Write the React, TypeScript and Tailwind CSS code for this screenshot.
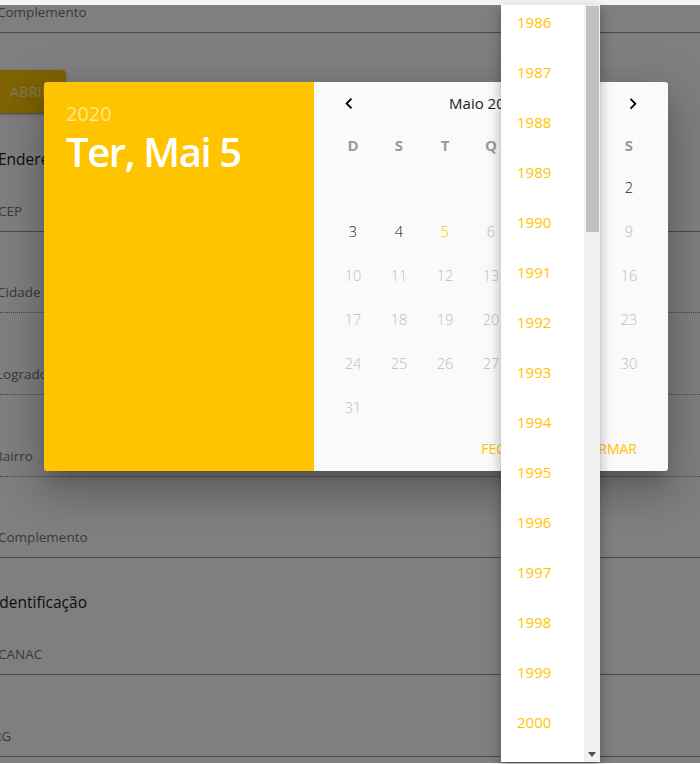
import React from "react";

type FieldProps = {
  label: string;
  height: string;
  shift: string;
  dotted?: boolean;
};

// underlying form field: label sits 10px above the bottom line
function Field({ label, height, shift, dotted }: FieldProps) {
  return (
    <div
      className={`${height} flex flex-col justify-end border-b ${
        dotted ? "border-dotted border-[#8a8a8a]" : "border-[#949494]"
      }`}
    >
      <span className={`${shift} mb-[10px] text-[13.5px] leading-[20px] text-[#757575] whitespace-nowrap`}>
        {label}
      </span>
    </div>
  );
}

function BackgroundForm() {
  return (
    <div className="flex flex-col w-[700px]">
      <Field label="Complemento" height="h-[33px]" shift="-ml-[3px]" />
      <button className="mt-[37px] -ml-[6px] h-[43px] w-[72px] rounded-[4px] bg-[#ffc400] text-left pl-[16px] text-[14px] font-medium tracking-[0.4px] text-[#fff2c0] shadow-[0_3px_1px_-2px_rgba(0,0,0,0.2),0_2px_2px_0_rgba(0,0,0,0.14),0_1px_5px_0_rgba(0,0,0,0.12)]">
        ABRIR
      </button>
      <h2 className="mt-[34px] -ml-[2px] text-[15.5px] leading-[24px] text-[#212121]">Endereço</h2>
      <Field label="CEP" height="h-[61px]" shift="-ml-[2px]" />
      <Field label="Cidade" height="h-[81px]" shift="-ml-[3px]" dotted />
      <Field label="Logradouro" height="h-[82px]" shift="-ml-[4px]" dotted />
      <Field label="Bairro" height="h-[82px]" shift="-ml-[6px]" dotted />
      <Field label="Complemento" height="h-[81px]" shift="-ml-[2px]" />
      <h2 className="mt-[32px] -ml-[5px] text-[15.5px] leading-[24px] text-[#212121]">Identificação</h2>
      <Field label="CANAC" height="h-[61px]" shift="-ml-[2px]" />
      <Field label="RG" height="h-[82px]" shift="-ml-[7px]" />
    </div>
  );
}

function Chevron({ dir }: { dir: "left" | "right" }) {
  return (
    <svg width="22" height="22" viewBox="0 0 24 24" fill="#000">
      {dir === "left" ? (
        <path d="M15.41 16.09l-4.58-4.59 4.58-4.59L14 5.5l-6 6 6 6z" />
      ) : (
        <path d="M8.59 16.34l4.58-4.59-4.58-4.59L10 5.75l6 6-6 6z" />
      )}
    </svg>
  );
}

const weekDays = ["D", "S", "T", "Q", "Q", "S", "S"];

// Maio 2020 starts on a Friday; dates after the 5th are disabled
const weeks: (number | null)[][] = [
  [null, null, null, null, null, 1, 2],
  [3, 4, 5, 6, 7, 8, 9],
  [10, 11, 12, 13, 14, 15, 16],
  [17, 18, 19, 20, 21, 22, 23],
  [24, 25, 26, 27, 28, 29, 30],
  [31, null, null, null, null, null, null],
];

function dayColor(d: number) {
  if (d === 5) return "text-[#ffc400]";
  if (d < 5) return "text-[#212121]";
  return "text-[#bdbdbd]";
}

function DateDialog() {
  return (
    <div className="absolute left-[44px] top-[82px] flex h-[389px] w-[624px] overflow-hidden rounded-[3px] shadow-[0_11px_15px_-7px_rgba(0,0,0,0.2),0_24px_38px_3px_rgba(0,0,0,0.14),0_9px_46px_8px_rgba(0,0,0,0.12)]">
      <div className="w-[270px] bg-[#ffc400] pl-[22px] pt-[18px]">
        <div className="text-[20px] leading-[28px] font-medium text-[#ffe590]">2020</div>
        <div className="text-[40px] leading-[48px] font-semibold tracking-[-1.4px] text-white whitespace-nowrap">
          Ter, Mai 5
        </div>
      </div>
      <div className="flex flex-1 flex-col bg-[#fafafa] px-4">
        <div className="flex h-[43px] items-center px-2">
          <Chevron dir="left" />
          <div className="flex-1 pr-[11px] text-center text-[15px] text-[#212121]">Maio 2020</div>
          <Chevron dir="right" />
        </div>
        <div className="grid h-[41px] grid-cols-7 items-center">
          {weekDays.map((w, i) => (
            <span key={i} className="text-center text-[15px] font-bold text-[#9a9a9a]">
              {w}
            </span>
          ))}
        </div>
        {weeks.map((row, r) => (
          <div key={r} className="grid h-[44px] grid-cols-7 items-center">
            {row.map((d, c) => (
              <span key={c} className={`text-center text-[14.5px] font-light ${d ? dayColor(d) : ""}`}>
                {d ?? ""}
              </span>
            ))}
          </div>
        ))}
        <div className="flex h-[36px] items-center justify-end gap-[8px] pr-[7px]">
          <button className="px-2 text-[14px] font-medium text-[#ffc400]">FECHAR</button>
          <button className="px-2 text-[14px] font-medium text-[#ffc400]">CONFIRMAR</button>
        </div>
      </div>
    </div>
  );
}

const years = Array.from({ length: 16 }, (_, i) => 1986 + i);

function YearMenu() {
  return (
    <div className="absolute left-[501px] top-[5px] flex h-[757px] w-[99px] overflow-hidden bg-white shadow-[0_5px_5px_-3px_rgba(0,0,0,0.2),0_8px_10px_1px_rgba(0,0,0,0.14),0_3px_14px_2px_rgba(0,0,0,0.12)]">
      <div className="-mt-[8px] flex w-[83px] flex-col">
        {years.map((y) => (
          <div key={y} className="flex h-[50px] shrink-0 items-center pl-4 text-[15px] text-[#ffc400]">
            {y}
          </div>
        ))}
      </div>
      <div className="relative w-[16px] bg-[#f1f1f1]">
        <div className="absolute left-[2px] right-[1px] top-[1px] h-[226px] bg-[#c1c1c1]" />
        <svg className="absolute bottom-[5px] left-[4px]" width="8" height="5" viewBox="0 0 8 5">
          <path d="M0 0h8L4 5z" fill="#505050" />
        </svg>
      </div>
    </div>
  );
}

export default function App() {
  return (
    <div className="relative h-[764px] w-[700px] overflow-hidden bg-white font-['Open_Sans','Noto_Sans',sans-serif]">
      <BackgroundForm />
      <div className="absolute inset-x-0 top-[5px] bottom-[1px] bg-black/50" />
      <div className="absolute inset-x-0 top-0 h-[5px] bg-[#f5f5f5]" />
      <DateDialog />
      <YearMenu />
    </div>
  );
}
